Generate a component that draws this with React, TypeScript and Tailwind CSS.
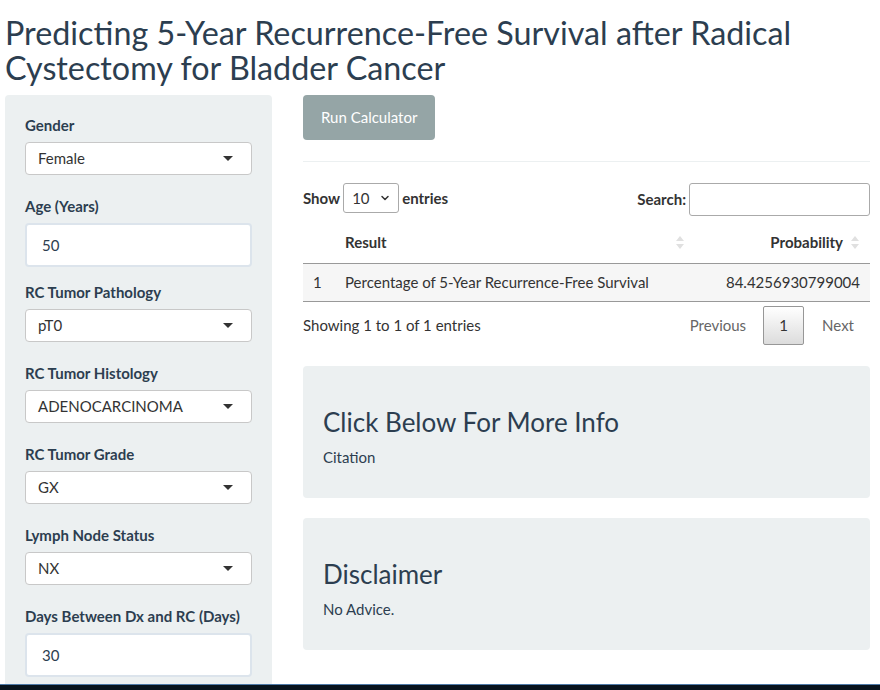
import { ChevronDown } from 'lucide-react'

const fields = [
  { label: 'Gender', kind: 'select', value: 'Female' },
  { label: 'Age (Years)', kind: 'input', value: '50' },
  { label: 'RC Tumor Pathology', kind: 'select', value: 'pT0' },
  { label: 'RC Tumor Histology', kind: 'select', value: 'ADENOCARCINOMA' },
  { label: 'RC Tumor Grade', kind: 'select', value: 'GX' },
  { label: 'Lymph Node Status', kind: 'select', value: 'NX' },
  { label: 'Days Between Dx and RC (Days)', kind: 'input', value: '30' },
]

function SortIcon() {
  return (
    <svg width="8" height="13" viewBox="0 0 8 13" className="shrink-0">
      <path d="M4 0 L8 5 L0 5 Z" fill="#e0e0e0" />
      <path d="M4 13 L8 8 L0 8 Z" fill="#e0e0e0" />
    </svg>
  )
}

function Field({ label, kind, value }: { label: string; kind: string; value: string }) {
  return (
    <div className={kind === 'select' ? 'mb-[21px]' : 'mb-[15px]'}>
      <div className="text-[15px] leading-[21px] font-bold text-[#2c3e50] mb-[6px]">{label}</div>
      {kind === 'select' ? (
        <div className="h-[33px] bg-white border border-[#c8c8c8] rounded-[4px] flex items-center justify-between pl-[12px] pr-[18px] text-[15px] text-[#333]">
          <span>{value}</span>
          <svg width="10" height="5" viewBox="0 0 10 5">
            <path d="M0 0 L10 0 L5 5 Z" fill="#333" />
          </svg>
        </div>
      ) : (
        <div className="h-[44px] bg-white border-2 border-[#dce4ec] rounded-[4px] flex items-center pl-[15px] text-[15px] text-[#2c3e50]">
          {value}
        </div>
      )}
    </div>
  )
}

function InfoWell({ title, text }: { title: string; text: string }) {
  return (
    <div className="bg-[#ecf0f1] rounded-[4px] px-[20px] py-[20px] mb-[20px]">
      <h3 className="mt-[22px] mb-[10px] text-[26px] leading-[29px] text-[#2c3e50]">{title}</h3>
      <p className="mb-[10px] text-[15px] leading-[21px] text-[#2c3e50]">{text}</p>
    </div>
  )
}

export default function App() {
  return (
    <div className="h-[690px] flex flex-col overflow-hidden bg-white" style={{ fontFamily: 'Lato, "Open Sans", sans-serif' }}>
      <div className="flex-1 overflow-hidden pl-[5px] pr-[10px]">
        <h2 className="pt-[15px] mb-[10px] text-[32.3px] leading-[35px] text-[#2c3e50]">
          Predicting 5-Year Recurrence-Free Survival after Radical Cystectomy for Bladder Cancer
        </h2>

        <div className="flex gap-[31px] items-start">
          <div className="w-[267px] shrink-0 bg-[#ecf0f1] rounded-[4px] px-[20px] pt-[20px] pb-[19px]">
            {fields.map((f) => (
              <Field key={f.label} {...f} />
            ))}
          </div>

          <div className="flex-1 min-w-0">
            <button className="h-[45px] px-[18px] bg-[#95a5a6] text-white text-[15px] rounded-[4px]">
              Run Calculator
            </button>
            <div className="mt-[21px] mb-[21px] border-t border-[#ecf0f1]" />

            <div className="flex items-center justify-between text-[15px] text-[#333]">
              <div className="flex items-center gap-[3px] font-bold mb-[3px]">
                <span>Show</span>
                <div className="w-[56px] h-[30px] border border-[#aaa] rounded-[3px] flex items-center justify-between pl-[8px] pr-[7px] font-normal">
                  <span>10</span>
                  <ChevronDown className="w-[12px] h-[12px]" strokeWidth={3} />
                </div>
                <span>entries</span>
              </div>
              <div className="flex items-center gap-[3px] font-bold">
                <span>Search:</span>
                <div className="w-[181px] h-[33px] border border-[#aaa] rounded-[3px] bg-white" />
              </div>
            </div>

            <div className="mt-[6px] text-[15px] text-[#333]">
              <div className="flex border-b border-[#999] font-bold leading-[21px]">
                <div className="w-[32px] py-[10px]" />
                <div className="flex-1 flex items-center justify-between py-[10px] pl-[10px] pr-[11px]">
                  <span>Result</span>
                  <SortIcon />
                </div>
                <div className="w-[175px] flex items-center justify-end gap-[8px] py-[10px] pr-[11px]">
                  <span>Probability</span>
                  <SortIcon />
                </div>
              </div>
              <div className="flex bg-[#f6f6f6] border-b border-[#999] leading-[21px]">
                <div className="w-[32px] py-[8px] pl-[10px]">1</div>
                <div className="flex-1 py-[8px] pl-[10px]">Percentage of 5-Year Recurrence-Free Survival</div>
                <div className="w-[175px] py-[8px] pr-[10px] text-right">84.4256930799004</div>
              </div>
            </div>

            <div className="flex items-center justify-between mt-[4px] text-[15px] text-[#333]">
              <span>Showing 1 to 1 of 1 entries</span>
              <div className="flex items-center">
                <span className="px-[15px] text-[#666]">Previous</span>
                <span className="ml-[2px] w-[41px] h-[39px] flex items-center justify-center border border-[#979797] rounded-[2px] bg-gradient-to-b from-white to-[#dcdcdc]">
                  1
                </span>
                <span className="ml-[2px] px-[16px] text-[#666]">Next</span>
              </div>
            </div>

            <div className="mt-[21px]">
              <InfoWell title="Click Below For More Info" text="Citation" />
              <InfoWell title="Disclaimer" text="No Advice." />
            </div>
          </div>
        </div>
      </div>
      <div className="h-[6px] shrink-0 bg-[#07131d] border-t border-[#4e79a6]" />
    </div>
  )
}
